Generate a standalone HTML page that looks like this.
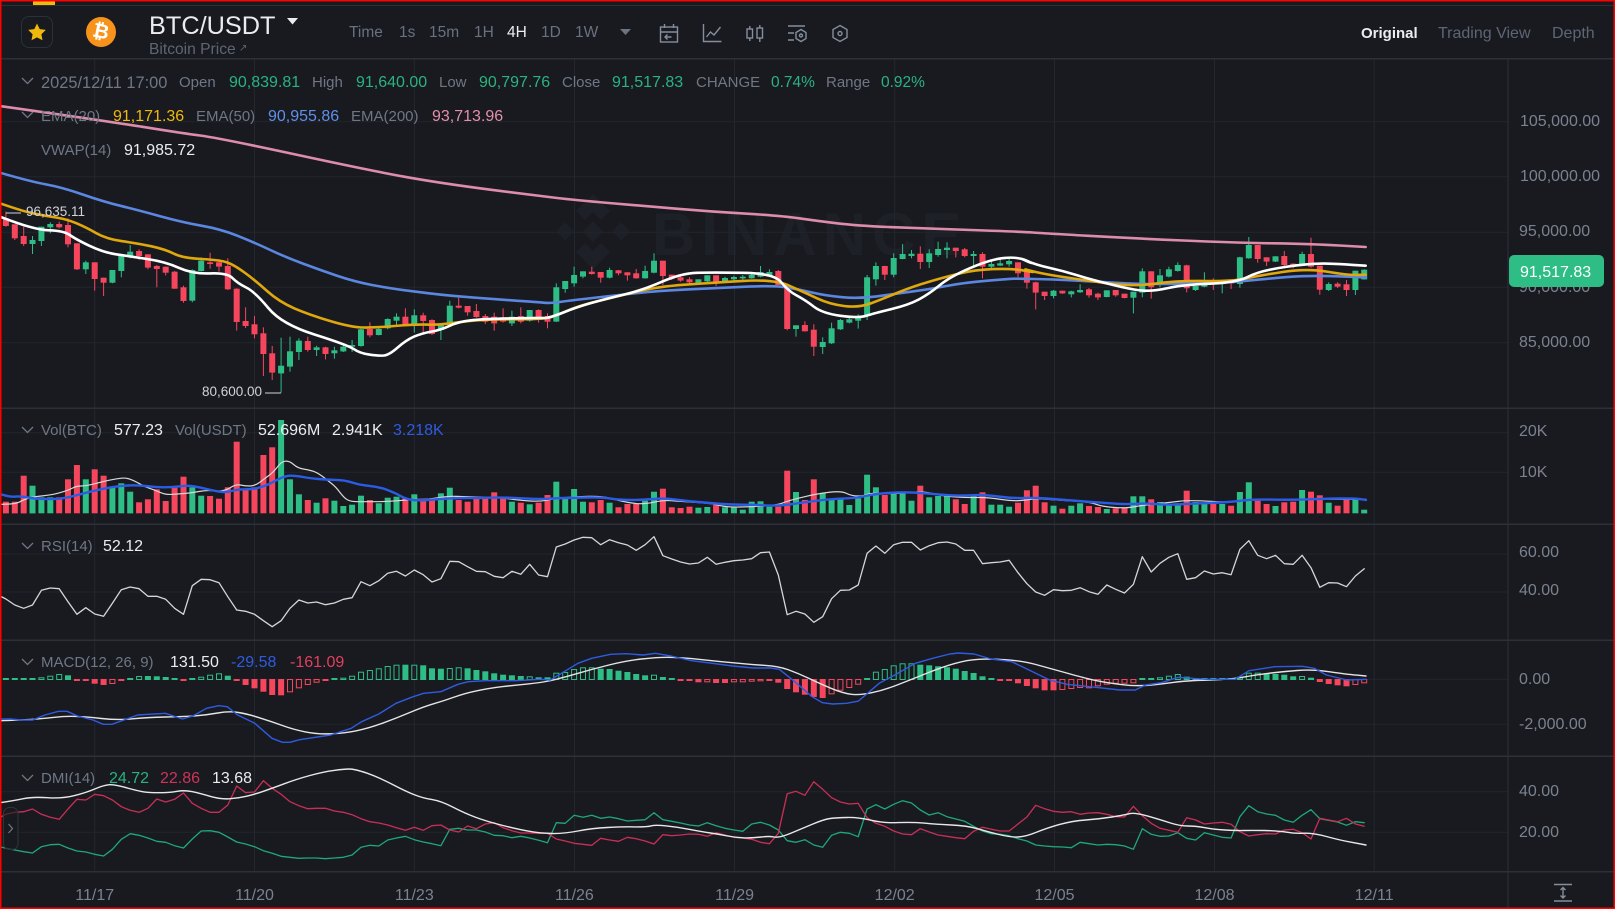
<!DOCTYPE html>
<html lang="en"><head><meta charset="utf-8"><title>BTC/USDT</title>
<style>
html,body{margin:0;padding:0;background:#181a20}
#p{position:relative;width:1615px;height:909px;overflow:hidden;background:#181a20;font-family:"Liberation Sans",sans-serif;font-size:16px;color:#6f7785}
#p svg{position:absolute;left:0;top:0}
#p span{position:absolute;white-space:nowrap;line-height:20px;height:20px}
#p span.l{font-size:15px}
.g{color:#2ab37f}.w{color:#eaecef}.r{color:#e0405c}.b{color:#2f5be0}
.a{color:#7b828e}
.t{color:#7b828e;transform:translateX(-50%)}
.h{color:#69717e;font-size:15.5px}
.o{position:absolute}
</style></head><body><div id="p">
<svg id="s" width="1615" height="909" viewBox="0 0 1615 909"></svg>

<div class="o" style="left:21px;top:16px;width:30px;height:30px;border:1px solid #2b3139;border-radius:8px"></div>
<div class="o" style="left:86px;top:17px;width:30px;height:30px;border-radius:50%;background:#f7931a"></div>
<span style="left:86px;top:21px;width:30px;text-align:center;color:#fff;font-size:20px;font-weight:bold;line-height:22px;transform:rotate(12deg)">&#8383;</span>

<span class="w" style="left:149px;top:13px;font-size:25.3px;line-height:26px;height:26px">BTC/USDT</span>
<span style="left:149px;top:40px;font-size:15.6px;color:#5e6673">Bitcoin Price</span>
<span style="left:239px;top:39px;font-size:10px;color:#5e6673">&#8599;</span>

<span class="h" style="left:349px;top:23px">Time</span>
<span class="h" style="left:399px;top:23px">1s</span>
<span class="h" style="left:429px;top:23px">15m</span>
<span class="h" style="left:474px;top:23px">1H</span>
<span class="h w" style="left:507px;top:23px;color:#eaecef">4H</span>
<span class="h" style="left:541px;top:23px">1D</span>
<span class="h" style="left:575px;top:23px">1W</span>

<span style="left:1361px;top:24px;font-size:15px;font-weight:bold;color:#eaecef">Original</span>
<span style="left:1438px;top:24px;font-size:16px;color:#5e6673">Trading View</span>
<span style="left:1552px;top:24px;font-size:16px;color:#5e6673">Depth</span>

<span style="left:41px;top:73px;font-size:16.4px">2025/12/11 17:00</span>
<span class="l" style="left:179px;top:73px">Open</span><span class="g" style="left:229px;top:73px">90,839.81</span>
<span class="l" style="left:312px;top:73px">High</span><span class="g" style="left:356px;top:73px">91,640.00</span>
<span class="l" style="left:439px;top:73px">Low</span><span class="g" style="left:479px;top:73px">90,797.76</span>
<span class="l" style="left:562px;top:73px">Close</span><span class="g" style="left:612px;top:73px">91,517.83</span>
<span class="l" style="left:696px;top:73px">CHANGE</span><span class="g" style="left:771px;top:73px;font-size:15.5px">0.74%</span>
<span class="l" style="left:826px;top:73px">Range</span><span class="g" style="left:881px;top:73px;font-size:15.5px">0.92%</span>

<span class="l" style="left:41px;top:107px">EMA(20)</span><span style="left:113px;top:107px;color:#f0b90b">91,171.36</span>
<span class="l" style="left:196px;top:107px">EMA(50)</span><span style="left:268px;top:107px;color:#5f8fe8">90,955.86</span>
<span class="l" style="left:351px;top:107px">EMA(200)</span><span style="left:432px;top:107px;color:#e58fa9">93,713.96</span>
<span class="l" style="left:41px;top:141px">VWAP(14)</span><span class="w" style="left:124px;top:141px">91,985.72</span>

<span style="left:26px;top:202px;font-size:13.5px;color:#d0d3d8">96,635.11</span>
<span style="left:202px;top:382px;font-size:13.5px;color:#d0d3d8">80,600.00</span>

<span class="l" style="left:41px;top:421px">Vol(BTC)</span><span class="w" style="left:114px;top:421px">577.23</span>
<span class="l" style="left:175px;top:421px">Vol(USDT)</span><span class="w" style="left:258px;top:421px">52.696M</span>
<span class="w" style="left:332px;top:421px">2.941K</span><span class="b" style="left:393px;top:421px">3.218K</span>

<span class="l" style="left:41px;top:537px">RSI(14)</span><span class="w" style="left:103px;top:537px">52.12</span>

<span class="l" style="left:41px;top:653px">MACD(12, 26, 9)</span><span class="w" style="left:170px;top:653px">131.50</span>
<span class="b" style="left:231px;top:653px">-29.58</span><span class="r" style="left:290px;top:653px">-161.09</span>

<span class="l" style="left:41px;top:769px">DMI(14)</span><span class="g" style="left:109px;top:769px">24.72</span>
<span style="left:160px;top:769px;color:#cf3358">22.86</span><span class="w" style="left:212px;top:769px">13.68</span>

<span class="a" style="left:1520px;top:112px">105,000.00</span>
<span class="a" style="left:1520px;top:167px">100,000.00</span>
<span class="a" style="left:1519px;top:222px">95,000.00</span>
<span class="a" style="left:1519px;top:278px">90,000.00</span>
<span class="a" style="left:1519px;top:333px">85,000.00</span>
<div class="o" style="left:1509px;top:255px;width:95px;height:32px;background:#2ebd85;border-radius:5px"></div>
<span style="left:1520px;top:263px;color:#fff">91,517.83</span>

<span class="a" style="left:1519px;top:422px">20K</span>
<span class="a" style="left:1519px;top:463px">10K</span>
<span class="a" style="left:1519px;top:543px">60.00</span>
<span class="a" style="left:1519px;top:581px">40.00</span>
<span class="a" style="left:1519px;top:670px">0.00</span>
<span class="a" style="left:1519px;top:715px">-2,000.00</span>
<span class="a" style="left:1519px;top:782px">40.00</span>
<span class="a" style="left:1519px;top:823px">20.00</span>

<span class="t" style="left:94.7px;top:886px">11/17</span>
<span class="t" style="left:254.5px;top:886px">11/20</span>
<span class="t" style="left:414.3px;top:886px">11/23</span>
<span class="t" style="left:574.4px;top:886px">11/26</span>
<span class="t" style="left:734.6px;top:886px">11/29</span>
<span class="t" style="left:894.7px;top:886px">12/02</span>
<span class="t" style="left:1054.5px;top:886px">12/05</span>
<span class="t" style="left:1214.5px;top:886px">12/08</span>
<span class="t" style="left:1374.2px;top:886px">12/11</span>
</div>
<script>
(function(){
var o='';
function R(x,y,w,h,c){o+='<rect x="'+x.toFixed(1)+'" y="'+y.toFixed(1)+'" width="'+w+'" height="'+h.toFixed(1)+'" fill="'+c+'"/>';}
var X=function(k){return 5.9+8.878*k};
var G='#2ebd85',D='#f6465d';

/* watermark */
o+='<g fill="#1e2027"><polygon points="593,194 610,211 601,220 593,212 585,220 576,211"/><polygon points="593,269 576,252 585,243 593,251 601,243 610,252"/><polygon points="556,231.500 565,222.500 574,231.500 565,240.500"/><polygon points="612,231.500 621,222.500 630,231.500 621,240.500"/><polygon points="593,221 603,231.500 593,242 583,231.500"/></g>';
o+='<text x="652" y="255" font-family="Liberation Sans" font-weight="bold" font-size="60" letter-spacing="6" fill="#1e2027">BINANCE</text>';

/* grid */
[121.7,176.7,232.3,287.3,342.7,432.7,472.3,554,592,679.3,724.3,791.7,832.3].forEach(function(y){R(0,y-.5,1508,1,'#21252c')});
[94.7,254.5,414.3,574.4,734.6,894.7,1054.5,1214.5,1374.2].forEach(function(x){R(x-.5,59,1,813,'#23272f')});
[58,407.500,523.500,639.500,755.500,871].forEach(function(y){R(0,y,1615,1.500,'#2b3039')});
R(1507.5,59,1,850,'#2b3039');
R(0,5,1615,1,'#2b3039');

/* candles */
var c1=[
[1,125,145,168,170],[1,163,163,205,210],[1,170,198,222,228],[0,198,210,222,252],[0,170,170,213,228],[0,157,162,172,190],[1,155,162,172,175],[1,145,165,223,232],[1,220,220,298,300],[0,272,277,298,312],
[1,277,277,327,362],[1,323,323,338,378],[0,300,300,338,340],[0,255,258,303,322],[0,225,245,258,265],[1,238,243,258,270],[1,253,253,293,298],[1,285,288,297,352],[1,290,290,308,316],[1,303,305,356,356],
[1,347,352,393,398],[0,298,300,392,397],[0,262,272,303,305],[1,248,277,282,296],[1,268,277,290,305],[1,265,288,358,360],[1,355,356,456,482],[1,412,453,468,474],[1,438,463,493,505],[1,472,490,552,618],
[1,528,550,608,630],[0,503,587,610,668],[0,500,544,590,605],[0,505,512,546,570],[1,500,513,540,545],[0,527,532,540,558],[1,530,532,552,568],[0,530,541,550,566],[0,527,530,544,546],[0,510,525,530,546],
[0,476,478,528,530],[1,457,477,496,502],[0,470,477,495,496],[0,445,447,475,478],[0,430,440,452,465],[1,415,440,462,468],[0,418,436,462,488],[1,428,436,453,490],[1,448,450,492,495],[0,460,465,480,510],
[0,392,407,457,460],[1,383,407,413,415],[1,408,408,427,437],[1,402,423,441,443],[1,432,438,455,462],[1,428,440,460,482],[1,415,442,455,458],[0,422,440,460,468],[1,412,438,455,460],[0,420,420,452,455],
[1,418,420,450,458],
[1,430,438,455,475],[0,340,352,455,456],[0,333,333,357,368],[0,290,315,340,350],[0,304,304,320,325],[1,290,305,312,314],[1,306,306,323,338],[0,293,300,323,325],[1,300,301,310,316],[1,307,307,316,332],
[1,297,310,325,326],[0,287,303,325,326],[0,250,272,308,310],[1,272,272,318,345],[1,314,314,326,330],[1,318,322,332,335],[1,322,328,337,343],[0,328,328,340,342],[0,316,316,334,336],[1,316,316,335,348],
[0,320,324,334,338],[0,317,321,328,334],[0,315,320,325,330],[0,305,315,325,326],[0,288,306,320,322],[0,298,306,318,320],[1,300,303,345,345],[1,345,345,477,481],[0,466,466,477,500],[1,454,465,484,485],
[1,463,479,530,558],[0,502,516,531,552],[0,458,475,520,522],[0,447,450,478,480],[0,440,448,458,460],[0,433,440,452,476],[0,315,322,438,450],[0,277,288,328,347],[1,287,288,314,330],[0,250,264,314,322],
[0,222,252,267,268],[0,240,251,258,265],[1,229,251,276,297],[0,238,250,276,294],[0,215,237,255,260],[0,217,233,240,265],[1,233,233,243,262],[1,234,238,258,262],[0,243,252,258,288],[1,247,252,290,325],
[0,275,282,290,295],[0,265,280,287,288],[0,265,273,283,290],[1,277,277,310,322],[1,305,305,338,356],[1,335,337,368,418],[1,365,365,378,390],[0,360,362,378,385],[1,362,362,370,372],[0,362,364,373,382]];
var c2=[
[0,253,270,277,279],[1,264,268,286,293],[1,278,281,292,300],[0,271,271,291,292],[1,270,270,286,290],[1,281,281,294,295],[0,275,275,293,340],[0,205,214,278,292],[1,214,214,262,296],[0,207,226,252,262],
[0,200,208,230,232],[0,187,195,213,215],[1,194,196,265,277],[0,258,258,270,273],[0,217,243,260,262],[1,235,240,245,270],[0,247,247,250,280],[1,245,245,250,267],[0,170,172,252,263],[0,111,135,175,176],
[1,135,135,177,188],[1,172,172,185,198],[0,169,169,185,186],[1,153,168,195,198],[1,190,191,200,205],[0,155,162,197,198],[1,113,162,200,203],[1,197,197,269,284],[0,247,252,270,273],[1,247,251,260,264],
[1,240,253,270,288],[0,212,212,270,285],[0,208,209,238,239]];
var cols=[];
function candle(a,k,y0){var x=X(k),c=a[0]?D:G;cols[k]=a[0];
 R(x-.5,y0+a[1]/3,1,(a[4]-a[1])/3,c);R(x-3,y0+a[2]/3,6,Math.max(1.5,(a[3]-a[2])/3),c);}
c1.forEach(function(a,i){candle(a,i,170)});
c2.forEach(function(a,i){candle(a,i+121,200)});

/* lines */
function pts(x0,y0,sx,s){return s.trim().split(/\s+/).map(function(p){var q=p.split(',');return (x0+q[0]/sx).toFixed(1)+','+(y0+q[1]/3).toFixed(1)}).join(' ');}
function PL(color,w,list){o+='<polyline fill="none" stroke="'+color+'" stroke-width="'+w+'" stroke-linejoin="round" stroke-linecap="round" points="'+list.join(' ')+'"/>';}
/* smoothed version: quadratic through midpoints */
function SM(color,w,list){
 var p=list.join(' ').trim().split(/\s+/).map(function(s){var q=s.split(',');return [+q[0],+q[1]]});
 var d='M'+p[0][0]+' '+p[0][1];
 for(var i=1;i<p.length-1;i++){var mx=(p[i][0]+p[i+1][0])/2,my=(p[i][1]+p[i+1][1])/2;
  d+='Q'+p[i][0]+' '+p[i][1]+' '+mx.toFixed(1)+' '+my.toFixed(1);}
 var e=p[p.length-1];d+='L'+e[0]+' '+e[1];
 o+='<path fill="none" stroke="'+color+'" stroke-width="'+w+'" stroke-linejoin="round" stroke-linecap="round" d="'+d+'"/>';
}
var S=2.904;
SM('#dd8dab',2.6,['0,106 104,120.7 181,133 219,138 367.5,170',pts(0,170,S,'1280,40 1568,78'),pts(540,170,S,'100,90 300,108 500,125 700,137 800,152 920,167 1100,175 1400,185'),pts(1000,200,3,'130,100 400,115 700,128 940,132 1097,141')]);
SM('#5c87e0',2.6,[pts(0,170,S,'0,8 90,35 180,52 300,95 400,120 530,157 640,177 740,218 830,262 930,300 1030,335 1130,355 1280,375 1400,385 1568,397'),pts(540,170,S,'30,400 100,390 230,375 340,363 500,355 680,346 750,358 830,377 925,386 1030,372 1130,358 1230,338 1370,326'),pts(1000,200,3,'50,236 160,238 270,244 400,252 530,252 700,247 790,237 930,226 1097,232')]);
SM('#e0a80d',2.6,[pts(0,170,S,'0,100 70,125 130,137 195,148 250,172 310,207 400,220 480,238 530,264 640,270 680,285 740,330 810,395 900,435 1020,472 1090,473 1200,463 1270,465 1340,455 1420,448 1568,448'),pts(540,170,S,'40,440 110,408 220,380 340,350 500,338 680,327 770,368 840,402 925,414 1000,385 1080,350 1180,320 1260,300 1370,295 1450,310'),pts(1000,200,3,'60,204 130,222 250,240 400,260 530,242 700,244 770,228 920,205 1040,225 1097,224')]);
SM('#ffffff',2.6,[pts(0,170,S,'5,142 100,180 185,182 220,208 300,247 370,258 480,275 560,312 660,308 690,340 740,365 818,463 1010,525 1045,550 1100,558 1130,555 1180,510 1225,490 1280,480 1330,455 1400,447 1568,443'),pts(540,170,S,'25,445 110,410 190,387 300,360 410,310 500,307 680,310 720,362 770,390 820,430 925,445 970,430 1070,405 1130,372 1190,320 1310,267 1390,260 1440,285'),pts(1000,200,3,'50,170 110,195 190,213 270,238 400,270 460,274 550,254 710,248 780,212 930,190 1020,192 1097,197')]);
R(6,212.5,15,1,'#d0d3d8');R(265,392.5,16,1,'#d0d3d8');

/* volume */
var v=[275,275,197,227,262,262,262,208,165,208,178,197,232,220,245,277,268,238,273,233,200,232,257,258,266,232,95,240,232,135,112,30,208,253,270,278,265,272,288,284,257,270,280,263,260,265,253,272,265,250,233,270,275,265,265,247,265,275,278,283,278,
255,215,265,237,275,277,270,278,292,282,282,272,245,236,292,294,290,293,291,285,292,292,299,275,274,290,290,182,246,270,208,250,270,268,285,265,194,232,255,248,248,272,227,262,258,255,268,282,257,247,284,284,290,278,241,227,277,287,296,287,
280,288,291,297,295,293,259,259,268,276,284,280,242,276,280,282,282,287,246,217,272,282,288,277,275,240,245,256,278,287,270,265,299];
v.forEach(function(t,k){R(X(k)-3,410+t/3,6,(310-t)/3,cols[k]?D:G)});
SM('#d8d8d8',1.2,[pts(0,410,S,'0,283 45,283 70,268 100,260 140,256 170,250 200,240 222,228 250,228 280,220 310,212 340,206 365,203 390,212 420,230 450,240 480,254 520,252 560,248 600,240 650,245 685,222 710,228 740,228 770,205 795,185 817,155 840,152 865,175 900,180 925,190 950,210 975,230 1000,265 1020,275 1060,275 1110,275 1160,272 1200,268 1250,268 1300,258 1350,260 1400,262 1450,262 1500,270 1568,275'),pts(540,410,S,'40,266 100,260 180,258 230,272 280,282 320,280 360,270 420,275 500,280 540,292 620,290 690,285 720,272 800,252 875,242 905,258 940,258 960,248 1040,252 1110,243 1170,258 1240,263 1300,262 1380,275 1440,265 1500,270'),pts(1075,410,S,'40,275 80,290 150,295 200,285 270,278 330,270 460,278 510,268 640,268 720,268 845,268')]);
SM('#2b5ce6',2.4,[pts(0,410,S,'0,252 30,262 60,258 100,266 160,268 200,262 250,248 300,236 350,227 400,225 450,232 500,232 545,226 580,232 620,242 655,248 690,238 735,238 770,228 800,212 830,197 860,197 900,205 950,209 1000,210 1045,225 1100,230 1150,250 1180,268 1220,272 1300,265 1400,264 1460,262 1568,268'),pts(540,410,S,'40,265 100,263 180,262 230,270 300,270 360,264 420,272 500,280 560,284 620,284 690,288 760,278 850,266 920,264 970,252 1050,246 1120,250 1170,255 1230,257 1290,254 1370,265 1440,263 1500,268'),pts(1075,410,S,'100,280 150,283 200,280 270,285 330,281 460,276 510,268 620,270 720,266 810,265 845,270')]);

function B(a,y0,st){return a.map(function(y,i){return X(i+st).toFixed(1)+','+(y0+y/3).toFixed(1)}).join(' ');}
var rsi=[567,585,595,585,541,534,536,575,613,593,612,619,580,539,531,536,559,559,568,595,613,527,508,509,518,560,600,604,613,632,650,632,595,570,579,576,584,579,568,563,515,527,512,490,484,498,480,494,516,506,454,455,470,484,485,499,503,484,493,463,495,
500,411,402,390,382,383,404,389,398,405,421,404,380,437,447,456,462,459,442,463,457,452,450,446,428,426,495,614,604,612,637,620,566,541,540,525,430,408,430,404,397,397,420,407,398,396,402,421,421,461,458,456,451,488,521,546,556,539,542,541,
533,545,553,525,538,549,523,440,486,460,442,431,508,503,483,492,488,494,418,392,436,446,436,461,463,436,473,532,518,519,530,498,476];
PL('#d6d6d6',1.3,['0,596',B(rsi,410,0)]);

/* macd hist */
var m=[6.5,3,3,3,8.5,13.5,18.5,14,-5,-5,-14,-18,-15.5,-5.5,6.5,12.5,12,11,9,3,-6,4,10.5,16.5,20.5,13,-6,-18,-28,-38,-48,-49,-40.5,-28.5,-18.5,-11.5,-6.5,3,7.5,13.5,25.5,30.5,35.5,42.5,46.5,46,46.5,44,35,34,36.5,38.5,35,30,26,20,16,14,12,11.5,8,
8,22.5,24.5,33.5,38.5,38.5,34,33,28,24,18,14,16.5,9,4,-5,-6,-10,-10.5,-12,-12,-10.5,-10.5,-8.5,-7.5,-6.5,-11,-30,-40,-47,-54,-57,-46.5,-35.5,-27.5,-17.5,6,25.5,33.5,44.5,50.5,50.5,46,44,41,38,34,27,21,11,4,-4,-4,-13,-21,-28,-34,-34,-33.5,-30.5,
-27.5,-28.5,-22.5,-17.5,-14.5,-14.5,-13.5,4,5,8.5,13.5,18.5,10,6,5,4,3,3,10.5,22.5,22.5,20,18,16,11,12.5,7,-9,-15,-19,-22,-18.5,-13.5];
m.forEach(function(v,k){var a=Math.abs(v),h=(a%1)!==0,t=Math.floor(a)/3,c=v>0?G:D,x=X(k)-3,y;
 if(t<2)t=2;
 y=v>0?680-t:679;
 if(h)o+='<rect x="'+(x+.5).toFixed(1)+'" y="'+(y+.5).toFixed(1)+'" width="5" height="'+Math.max(1,t-1).toFixed(1)+'" fill="none" stroke="'+c+'" stroke-width="1"/>';
 else R(x,y,6,t,c);});
SM('#e4e4e4',1.4,[pts(0,640,S,'0,242 60,240 120,236 190,228 250,230 340,241 430,232 530,230 600,225 665,213 720,222 790,245 850,268 920,283 1000,280 1070,265 1150,235 1230,200 1290,182 1350,160 1420,145 1500,135 1568,128'),pts(540,640,S,'50,118 150,88 250,62 340,52 400,52 480,60 560,68 620,74 690,78 750,100 810,130 880,160 930,166 1000,150 1080,118 1170,80 1240,60 1300,56 1400,62 1480,85 1568,110'),pts(1075,640,S,'60,122 130,134 190,138 250,132 320,122 460,118 520,105 600,95 690,88 790,103 845,108')]);
PL('#2f5be0',1.4,[pts(0,640,S,'0,237 30,237 60,240 95,240 130,225 170,214 195,214 225,228 270,240 300,253 325,253 360,240 400,225 480,220 530,237 560,228 600,205 635,197 660,200 690,225 740,250 790,295 820,307 842,307 870,299 960,285 1020,265 1050,245 1100,222 1150,190 1200,170 1230,160 1280,155 1330,133 1360,125 1410,122 1500,122 1568,118'),pts(540,640,S,'30,120 70,95 110,70 150,55 205,43 250,41 300,45 335,40 380,48 440,62 500,70 560,78 620,84 670,84 695,88 740,125 790,170 820,188 850,192 890,190 925,183 985,130 1030,105 1090,70 1140,55 1190,42 1215,39 1260,42 1310,57 1370,65 1420,90 1480,120 1530,133 1568,137'),pts(1075,640,S,'60,142 130,150 175,150 205,135 250,128 300,112 380,118 465,118 505,92 580,80 660,79 695,85 730,105 790,120 845,118')]);

/* DMI */
var dr=[523,517,515,507,523,532,538,507,478,480,463,467,480,500,511,517,505,477,486,478,459,490,505,517,517,495,438,458,456,422,445,463,485,497,506,505,505,513,517,524,536,545,549,555,563,571,562,571,557,555,570,576,558,566,552,548,563,572,579,579,580,
580,597,603,610,613,616,595,600,604,592,596,603,612,584,587,585,582,583,589,578,585,592,594,598,607,611,580,461,454,466,425,448,473,486,492,490,533,550,559,573,582,584,566,576,585,589,593,596,574,562,568,573,573,552,531,496,506,514,517,515,
523,519,518,523,530,531,499,527,550,565,571,577,533,540,552,549,547,553,575,588,584,581,582,570,568,578,597,535,540,545,535,552,559];
var dg=[625,630,635,639,620,614,613,624,633,636,643,648,628,598,581,586,594,604,607,617,624,597,573,572,577,591,606,612,620,632,640,649,652,655,654,654,656,654,652,645,622,616,618,600,594,589,599,606,611,617,568,565,570,570,576,586,587,593,589,594,601,
608,548,550,526,532,526,535,531,536,543,541,539,518,539,544,549,555,558,548,557,565,570,574,552,547,555,570,602,607,599,615,622,586,577,580,590,507,494,507,493,482,489,510,525,518,530,537,544,559,573,581,583,587,596,603,615,618,620,621,623,
607,611,615,613,614,618,628,566,583,589,588,578,595,600,578,585,592,594,530,497,515,522,526,540,547,526,509,536,541,546,556,545,548];
PL('#1fa878',1.3,['1,847',B(dg,640,0)]);
PL('#c92f55',1.3,['1,817',B(dr,640,0)]);
SM('#e8e8e8',1.4,[pts(0,640,S,'0,488 40,482 95,470 180,476 250,458 300,436 330,433 390,450 430,458 490,458 535,450 580,460 640,478 690,475 740,463 790,445 860,418 940,395 1000,387 1030,387 1100,412 1180,455 1230,475 1280,483 1350,520 1410,543 1500,567 1568,580'),pts(540,640,S,'70,581 150,565 240,560 310,561 335,554 400,561 470,575 520,583 570,593 620,594 665,588 695,594 760,566 825,538 860,533 925,532 1000,550 1080,546 1150,553 1240,557 1300,575 1365,592 1410,590 1470,565 1545,543'),pts(1075,640,S,'70,537 145,525 173,517 250,540 305,558 350,558 400,568 470,572 510,571 590,572 640,581 690,578 770,601 845,615')]);

/* chevrons */
[81,115,430,546,662,778].forEach(function(y){o+='<path d="M22 '+(y-3)+'l5.500 5.500 5.500-5.500" fill="none" stroke="#6f7785" stroke-width="1.300"/>'});

/* handle */
o+='<rect x="3.500" y="807.500" width="14.500" height="42" rx="6" fill="#181a20" fill-opacity=".6" stroke="#2f343d"/>';
o+='<path d="M8.500 824l4 4.500-4 4.500" fill="none" stroke="#6f7785" stroke-width="1.200"/>';

o+='<path d="M287 18h11l-5.500 6.500z" fill="#eaecef"/>';
o+='<path d="M620 29h11l-5.500 6z" fill="#6c7480"/>';
o+='<path d="M37 23.500l2.700 5.600 6.100.8-4.400 4.300 1.100 6.100-5.500-2.900-5.500 2.900 1.100-6.100-4.400-4.300 6.100-.8z" fill="#f0b90b"/>';

var st='fill="none" stroke="#848e9c" stroke-width="1.400"';
o+='<g '+st+'><rect x="660.500" y="27" width="17" height="15"/><path d="M660.500 32h17M664.500 24v4M673.500 24v4M671.500 37h-6M667.500 34.500l-2.500 2.500 2.500 2.500"/></g>';
o+='<g '+st+'><path d="M703.500 24v17.500h18M706.500 37l4-5 3.500 3 6.500-8"/></g>';
o+='<g '+st+'><rect x="747" y="29" width="5.500" height="9"/><rect x="757" y="28" width="5.500" height="10"/><path d="M749.800 26v3M749.800 38v3M759.800 25v3M759.800 38v4"/></g>';
o+='<g '+st+'><path d="M788 26h17M788 33h6M788 40h6M801 29.500l5 3v6l-5 3-5-3v-6z"/><circle cx="801" cy="35.500" r="1.500"/></g>';
o+='<g '+st+'><path d="M840 25.500l7 4v8l-7 4-7-4v-8z"/><circle cx="840" cy="33.500" r="2"/></g>';

o+='<g fill="none" stroke="#848e9c" stroke-width="1.400"><path d="M1554 884.500h18M1554 901h18M1563 888v9.500M1560.500 890l2.500-2.500 2.500 2.500M1560.500 895.500l2.500 2.500 2.500-2.500"/></g>';

R(33,0,22,5,'#f0b90b');
R(0,0,1615,1.5,'#ff0000');R(0,907.5,1615,1.5,'#ff0000');R(0,0,1.5,909,'#ff0000');R(1613.5,0,1.5,909,'#ff0000');

document.getElementById('s').innerHTML=o;
})();
</script>
</body></html>
